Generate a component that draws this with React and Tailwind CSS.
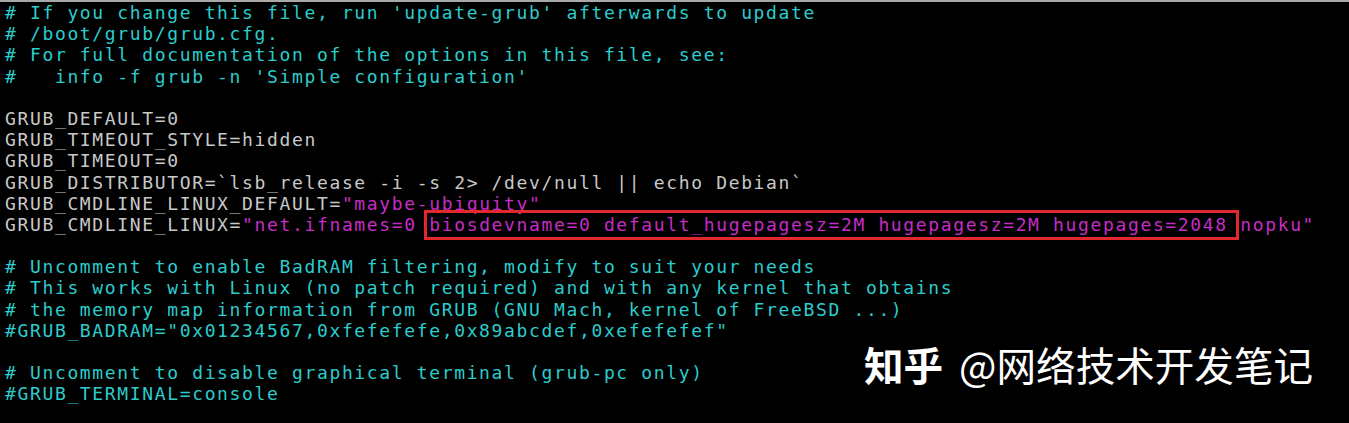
import React from "react";

const C = "text-[#2ccccc]";
const W = "text-[#c8c8c8]";
const M = "text-[#c62cc6]";

const lines = [
  [[C, "# If you change this file, run 'update-grub' afterwards to update"]],
  [[C, "# /boot/grub/grub.cfg."]],
  [[C, "# For full documentation of the options in this file, see:"]],
  [[C, "#   info -f grub -n 'Simple configuration'"]],
  [],
  [[W, "GRUB_DEFAULT=0"]],
  [[W, "GRUB_TIMEOUT_STYLE=hidden"]],
  [[W, "GRUB_TIMEOUT=0"]],
  [[W, "GRUB_DISTRIBUTOR=`lsb_release -i -s 2> /dev/null || echo Debian`"]],
  [[W, "GRUB_CMDLINE_LINUX_DEFAULT="], [M, '"maybe-ubiquity"']],
  "cmdline",
  [],
  [[C, "# Uncomment to enable BadRAM filtering, modify to suit your needs"]],
  [[C, "# This works with Linux (no patch required) and with any kernel that obtains"]],
  [[C, "# the memory map information from GRUB (GNU Mach, kernel of FreeBSD ...)"]],
  [[C, '#GRUB_BADRAM="0x01234567,0xfefefefe,0x89abcdef,0xefefefef"']],
  [],
  [[C, "# Uncomment to disable graphical terminal (grub-pc only)"]],
  [[C, "#GRUB_TERMINAL=console"]],
];

function CmdLine() {
  return (
    <div className="h-[21.2px]">
      <span className={W}>GRUB_CMDLINE_LINUX=</span>
      <span className={M}>"net.ifnames=0 </span>
      <span className={`relative ${M}`}>
        biosdevname=0 default_hugepagesz=2M hugepagesz=2M hugepages=2048
        <span className="absolute -left-[5px] -right-[11px] -top-[4px] -bottom-[5px] border-[3px] border-[#e2282c]" />
      </span>
      <span className={M}> nopku"</span>
    </div>
  );
}

export default function App() {
  return (
    <div className="relative w-[1349px] h-[423px] overflow-hidden bg-black border-t-2 border-[#a8a8a8]">
      <div className="pl-[5px] font-['DejaVu_Sans_Mono',monospace] text-[18px] leading-[21.2px] tracking-[1.64px] whitespace-pre">
        {lines.map((line, i) =>
          line === "cmdline" ? (
            <CmdLine key={i} />
          ) : (
            <div key={i} className="h-[21.2px]">
              {line.map(([cls, t], j) => (
                <span key={j} className={cls}>{t}</span>
              ))}
            </div>
          )
        )}
      </div>

      {/* watermark */}
      <div className="absolute left-[864px] top-[342px] flex items-center text-white text-[39.6px] leading-none font-['Noto_Sans_CJK_SC',sans-serif] whitespace-pre">
        <span className="font-semibold">知乎</span>
        <span className="ml-[7px]"> @网络技术开发笔记</span>
      </div>
    </div>
  );
}
